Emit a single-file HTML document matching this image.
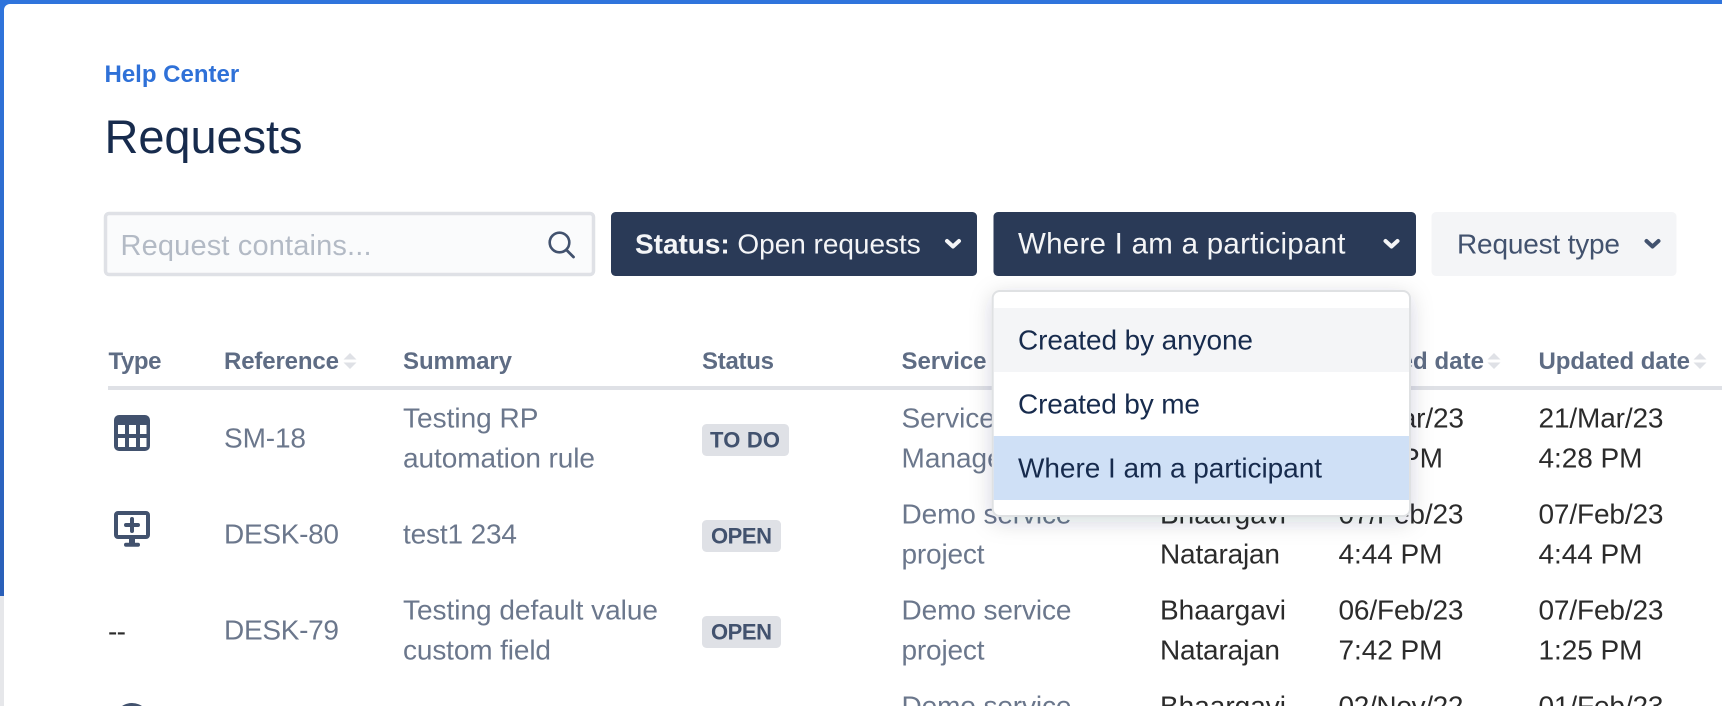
<!DOCTYPE html>
<html lang="en"><head><meta charset="utf-8"><title>Requests</title>
<style>
html,body{margin:0;padding:0;width:1722px;height:706px;overflow:hidden;background:#fff}
svg{display:block}
text{font-family:"Liberation Sans",sans-serif;white-space:pre}
.h{font-size:24px;font-weight:700;fill:#5e6c84}
.g{font-size:28px;fill:#6b778c}
.d{font-size:28px;fill:#2b2b2b}
.l{font-size:22px;font-weight:700;fill:#42526e}
.m{font-size:28px;fill:#172b4d}
.c{fill:none;stroke-width:4;stroke-linecap:round;stroke-linejoin:round}
</style></head><body>
<svg width="1722" height="706" viewBox="0 0 1722 706" xmlns="http://www.w3.org/2000/svg">
<defs>
<linearGradient id="bar" x1="0" y1="0" x2="0" y2="1"><stop offset="0" stop-color="#2f74dc"/><stop offset="1" stop-color="#2a5fb8"/></linearGradient>
<filter id="sh" x="-15%" y="-15%" width="130%" height="135%"><feDropShadow dx="0" dy="5" stdDeviation="11" flood-color="#091e42" flood-opacity=".17"/></filter>
</defs>
<rect width="1722" height="706" fill="#fff"/>
<rect x="0" y="0" width="4" height="596" fill="url(#bar)"/>
<rect x="0" y="596" width="4" height="110" fill="#e6e7ea"/>
<rect x="0" y="0" width="1722" height="4" fill="#2f74dc"/>
<path d="M4 4h6a6 6 0 0 0-6 6z" fill="#2f74dc"/>

<text x="104.5" y="82" font-size="24" font-weight="700" fill="#2f71d8" textLength="134.7">Help Center</text>
<text x="104.5" y="153" font-size="47" fill="#172b4d" textLength="198">Requests</text>

<rect x="105.5" y="213.5" width="488" height="61" rx="3.5" fill="#fafbfc" stroke="#dfe1e6" stroke-width="3.5"/>
<text x="120.500" y="255" font-size="29" fill="#b3bac5" textLength="251">Request contains...</text>
<circle cx="559.5" cy="242.5" r="9.8" fill="none" stroke="#42526e" stroke-width="2.6"/>
<path d="M566.5 250l7 7" fill="none" stroke="#42526e" stroke-width="2.8" stroke-linecap="round"/>

<rect x="611" y="212" width="366" height="64" rx="4.5" fill="#2a3a57"/>
<text x="635" y="253.500" font-size="28" fill="#f4f5f7" textLength="285.7"><tspan font-weight="700">Status:</tspan> Open requests</text>
<path class="c" d="M947 241l6 5.500 6-5.500" stroke="#f4f5f7"/>

<rect x="993.500" y="212" width="422.500" height="64" rx="4.5" fill="#2a3a57"/>
<text x="1018" y="253.500" font-size="29.500" fill="#f4f5f7" textLength="327.5">Where I am a participant</text>
<path class="c" d="M1385.500 241l6 5.500 6-5.500" stroke="#f4f5f7"/>

<rect x="1431.5" y="212" width="245" height="64" rx="4.5" fill="#f4f5f7"/>
<text x="1457" y="253.500" font-size="28" fill="#42526e" textLength="163">Request type</text>
<path class="c" d="M1646.500 241l6 5.500 6-5.500" stroke="#42526e"/>

<!-- table header -->
<text class="h" x="108.5" y="369" textLength="53">Type</text>
<text class="h" x="224" y="369" textLength="115">Reference</text>
<path d="M350 353l6.500 6.500h-13zM350 369l6.500-6.500h-13z" fill="#dfe1e6"/>
<text class="h" x="403" y="369" textLength="109">Summary</text>
<text class="h" x="702" y="369" textLength="72">Status</text>
<text class="h" x="901.500" y="369" textLength="85">Service</text>
<text class="h" x="1338" y="369" textLength="146">Created date</text>
<path d="M1494 353l6.500 6.500h-13zM1494 369l6.500-6.500h-13z" fill="#dfe1e6"/>
<text class="h" x="1538.500" y="369" textLength="151.500">Updated date</text>
<path d="M1700 353l6.500 6.500h-13zM1700 369l6.500-6.500h-13z" fill="#dfe1e6"/>
<rect x="108" y="386" width="1614" height="4" fill="#dfe1e6"/>

<!-- row 1 -->
<path fill="#42526e" fill-rule="evenodd" d="M119 415h26a5 5 0 0 1 5 5v26a5 5 0 0 1-5 5h-26a5 5 0 0 1-5-5v-26a5 5 0 0 1 5-5zM118 425v9h7v-9zM129 425v9h7v-9zM140 425v9h6.500v-9zM118 438v9h7v-9zM129 438v9h7v-9zM140 438v9h6.500v-9z"/>
<text class="g" x="224" y="447.500" textLength="82">SM-18</text>
<text class="g" x="403" y="427.500">Testing RP</text>
<text class="g" x="403" y="467.500" textLength="192">automation rule</text>
<rect x="702" y="424" width="87" height="32" rx="4.500" fill="#dfe1e6"/>
<text class="l" x="710" y="447.500" textLength="70">TO DO</text>
<text class="g" x="901.500" y="427.500">Service</text>
<text class="g" x="901.500" y="467.500">Management</text>
<text class="d" x="1339" y="427.500" textLength="125">21/Mar/23</text>
<text class="d" x="1339" y="467.500" textLength="104">4:28 PM</text>
<text class="d" x="1538.500" y="427.500" textLength="125">21/Mar/23</text>
<text class="d" x="1538.500" y="467.500" textLength="104">4:28 PM</text>

<!-- row 2 -->
<path fill="#42526e" fill-rule="evenodd" d="M118 511h28a4 4 0 0 1 4 4v20a4 4 0 0 1-4 4h-11v3.700h3a2 2 0 0 1 0 4h-12a2 2 0 0 1 0-4h3V539h-11a4 4 0 0 1-4-4v-20a4 4 0 0 1 4-4zM118 515v20h28v-20z"/>
<path d="M126 525h12M132 519v12" stroke="#42526e" stroke-width="4" stroke-linecap="round"/>
<text class="g" x="224" y="543.500" textLength="115">DESK-80</text>
<text class="g" x="403" y="543.500" textLength="114">test1 234</text>
<rect x="702" y="520" width="79" height="32" rx="4.500" fill="#dfe1e6"/>
<text class="l" x="711" y="543.500" textLength="61">OPEN</text>
<text class="g" x="901.500" y="523.500" textLength="170">Demo service</text>
<text class="g" x="901.500" y="563.500" textLength="83">project</text>
<text class="d" x="1160" y="523.500" textLength="126">Bhaargavi</text>
<text class="d" x="1160" y="563.500" textLength="120">Natarajan</text>
<text class="d" x="1338.500" y="523.500" textLength="125">07/Feb/23</text>
<text class="d" x="1338.500" y="563.500" textLength="104">4:44 PM</text>
<text class="d" x="1538.500" y="523.500" textLength="125">07/Feb/23</text>
<text class="d" x="1538.500" y="563.500" textLength="104">4:44 PM</text>

<!-- row 3 -->
<text class="d" x="108" y="641" textLength="18">--</text>
<text class="g" x="224" y="639.500" textLength="115">DESK-79</text>
<text class="g" x="403" y="619.500" textLength="255">Testing default value</text>
<text class="g" x="403" y="659.500" textLength="148">custom field</text>
<rect x="702" y="616" width="79" height="32" rx="4.500" fill="#dfe1e6"/>
<text class="l" x="711" y="639.500" textLength="61">OPEN</text>
<text class="g" x="901.500" y="619.500" textLength="170">Demo service</text>
<text class="g" x="901.500" y="659.500" textLength="83">project</text>
<text class="d" x="1160" y="619.500" textLength="126">Bhaargavi</text>
<text class="d" x="1160" y="659.500" textLength="120">Natarajan</text>
<text class="d" x="1338.500" y="619.500" textLength="125">06/Feb/23</text>
<text class="d" x="1338.500" y="659.500" textLength="104">7:42 PM</text>
<text class="d" x="1538.500" y="619.500" textLength="125">07/Feb/23</text>
<text class="d" x="1538.500" y="659.500" textLength="104">1:25 PM</text>

<!-- row 4 -->
<circle cx="132" cy="721" r="18" fill="#42526e"/>
<text class="g" x="901.500" y="715.500" textLength="170">Demo service</text>
<text class="d" x="1160" y="715.500" textLength="126">Bhaargavi</text>
<text class="d" x="1338.500" y="715.500" textLength="125">02/Nov/22</text>
<text class="d" x="1538.500" y="715.500" textLength="125">01/Feb/23</text>

<!-- dropdown -->
<rect x="992.700" y="291" width="417.300" height="225" rx="7" fill="#fff" stroke="#dfe1e3" stroke-width="2" filter="url(#sh)"/>
<rect x="993.700" y="308" width="415.300" height="64" fill="#f4f5f7"/>
<rect x="993.700" y="436" width="415.300" height="64" fill="#cfe0f6"/>
<text class="m" x="1018" y="349.500" textLength="235">Created by anyone</text>
<text class="m" x="1018" y="413.500" textLength="182">Created by me</text>
<text class="m" x="1018" y="477.500" textLength="304">Where I am a participant</text>
</svg>
</body></html>
